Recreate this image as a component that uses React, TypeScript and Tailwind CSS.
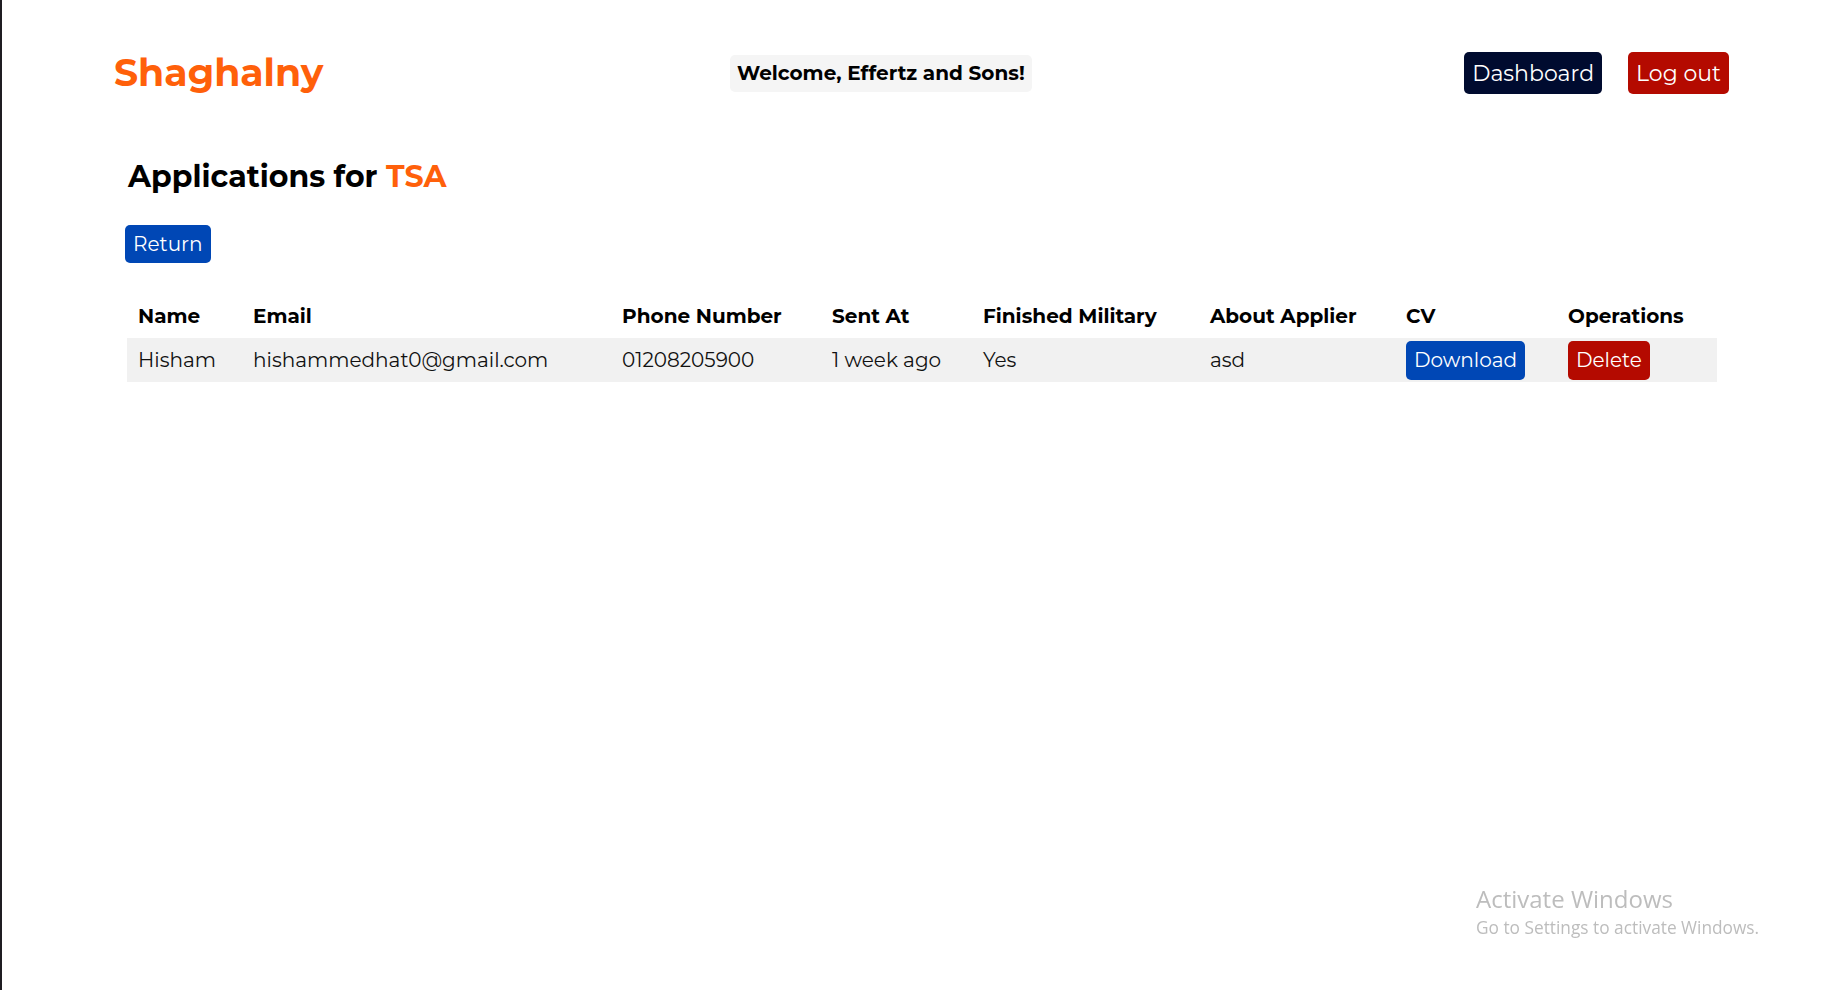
import React from "react";

const font = { fontFamily: '"Montserrat", "DejaVu Sans", sans-serif' };

const cols = "grid grid-cols-[115px_369px_210px_151px_227px_196px_162px_160px]";

export default function App() {
  const headers = [
    "Name",
    "Email",
    "Phone Number",
    "Sent At",
    "Finished Military",
    "About Applier",
    "CV",
    "Operations",
  ];
  return (
    <div
      className="relative min-h-[990px] w-full bg-white text-[#111] overflow-hidden"
      style={font}
    >
      {/* left window edge */}
      <div className="fixed left-0 top-0 h-full w-[2px] bg-[#1f1d22]" />

      {/* header */}
      <header className="mt-[37px] flex h-[72px] items-center pl-[114px] pr-[112px]">
        <div className="w-[616px] text-[37.8px] font-bold text-[#ff600a] leading-none">
          Shaghalny
        </div>
        <div className="flex h-[37px] items-center rounded-[5px] bg-[#f5f5f5] px-[7px] text-[20px] font-bold text-black">
          Welcome, Effertz and Sons!
        </div>
        <div className="ml-auto flex items-center gap-[26px]">
          <button className="flex h-[42px] items-center rounded-[5px] bg-[#000b2f] px-[8px] text-[22px] text-white">
            Dashboard
          </button>
          <button className="flex h-[42px] items-center rounded-[5px] bg-[#b40a00] px-[8px] text-[22px] text-white">
            Log out
          </button>
        </div>
      </header>

      {/* content */}
      <main className="mt-[50px] pl-[125px]">
        <h1 className="pl-[3px] text-[30px] font-bold leading-[36px] text-black">
          Applications for <span className="text-[#ff600a]">TSA</span>
        </h1>
        <button className="mt-[30px] flex h-[38px] items-center rounded-[5px] bg-[#0047b5] px-[8px] text-[20px] text-white">
          Return
        </button>

        <div className="ml-[2px] mt-[31px] w-[1590px]">
          <div className={`${cols} h-[44px] items-center`}>
            {headers.map((h) => (
              <div key={h} className="px-[11px] text-[20px] font-bold text-black whitespace-nowrap">
                {h}
              </div>
            ))}
          </div>
          <div className={`${cols} h-[44px] items-center bg-[#f1f1f1] text-[20px]`}>
            <div className="px-[11px] whitespace-nowrap">Hisham</div>
            <div className="px-[11px] whitespace-nowrap">hishammedhat0@gmail.com</div>
            <div className="px-[11px] whitespace-nowrap">01208205900</div>
            <div className="px-[11px] whitespace-nowrap">1 week ago</div>
            <div className="px-[11px] whitespace-nowrap">Yes</div>
            <div className="px-[11px] whitespace-nowrap">asd</div>
            <div className="px-[11px]">
              <button className="flex h-[39px] items-center rounded-[5px] bg-[#0047b5] px-[8px] text-[20px] text-white">
                Download
              </button>
            </div>
            <div className="px-[11px]">
              <button className="flex h-[39px] items-center rounded-[5px] bg-[#b40a00] px-[8px] text-[20px] text-white">
                Delete
              </button>
            </div>
          </div>
        </div>
      </main>

      {/* Windows activation watermark */}
      <div
        className="pointer-events-none fixed left-[1476px] top-[882px] text-[#bdbdbd]"
        style={{ fontFamily: '"Open Sans", "Noto Sans", sans-serif' }}
      >
        <div className="text-[24px] leading-[33px]">Activate Windows</div>
        <div className="text-[17.3px] leading-[25px]">Go to Settings to activate Windows.</div>
      </div>
    </div>
  );
}
